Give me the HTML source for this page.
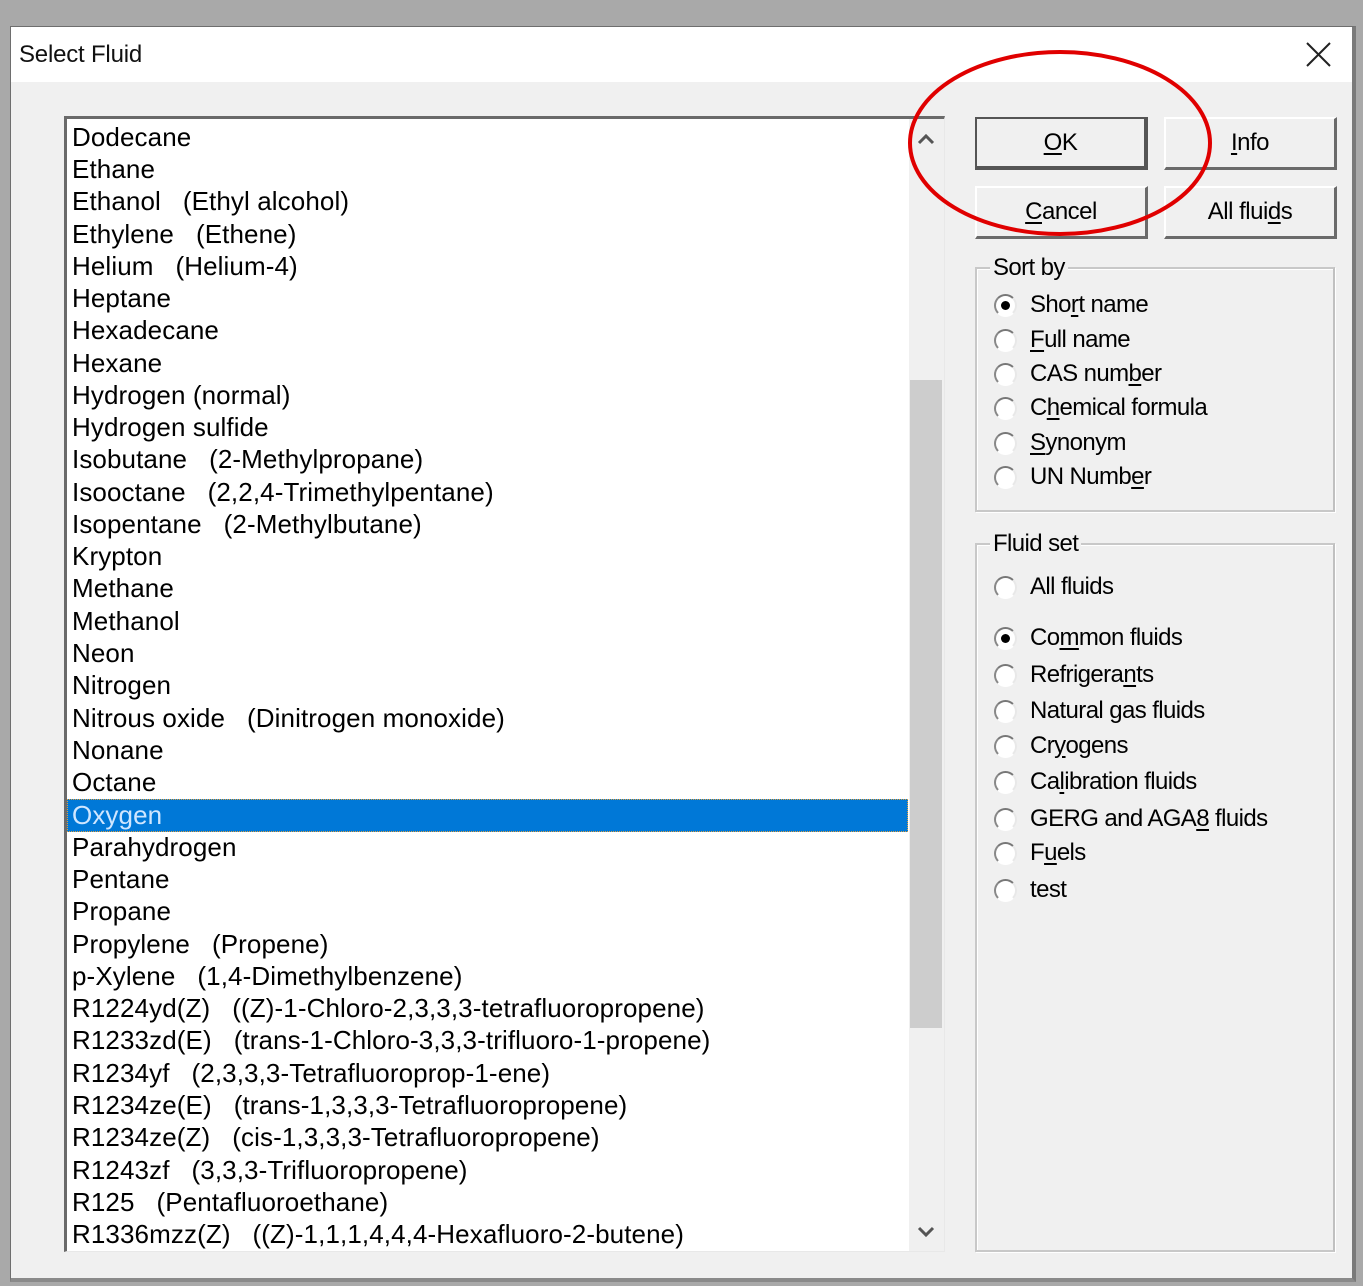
<!DOCTYPE html>
<html><head><meta charset="utf-8"><style>
*{margin:0;padding:0;box-sizing:border-box}
body{width:1363px;height:1286px;background:#a9a9a9;position:relative;overflow:hidden;font-family:"Liberation Sans",Arial,sans-serif}
.win{position:absolute;left:10px;top:26px;width:1346px;height:1256px;background:#f0f0f0;border:1px solid #6e6e6e;border-right:4px solid #7a7a7a;border-bottom:4px solid #8a8a8a}
.title{position:absolute;left:0;top:0;right:0;height:55px;background:#fff}
.title span{position:absolute;left:8px;top:14px;font-size:24px;color:#111;letter-spacing:-0.2px}
.abs{position:absolute}
.list{position:absolute;left:64px;top:116px;width:881px;height:1136px;background:#fff;border-top:3px solid #6a6a6a;border-left:3px solid #6a6a6a;border-right:1px solid #e8e8e8;border-bottom:1px solid #e8e8e8;overflow:hidden}
.row{position:absolute;left:5px;height:32px;line-height:32px;font-size:26px;color:#000;white-space:pre;letter-spacing:0.1px}
.sel{position:absolute;left:0;top:680px;width:841px;height:33px;background:#0078d7;outline:1px dotted #e0a040;outline-offset:-1px}
.sb{position:absolute;left:909px;top:119px;width:35px;height:1132px;background:#f0f0f0}
.thumb{position:absolute;left:910px;top:380px;width:32px;height:648px;background:#cdcdcd}
.btn{position:absolute;width:173px;height:53px;background:#f0f0f0;border-top:2px solid #fff;border-left:2px solid #fff;border-right:3px solid #6a6a6a;border-bottom:3px solid #6a6a6a;font-size:24px;text-align:center;line-height:48px;color:#000;letter-spacing:-0.5px}
.grp{position:absolute;border:2px solid #c8c8c8;border-right-color:#c0c0c0;box-shadow:inset 1px 1px 0 #fff,1px 1px 0 #fff}
.lg{position:absolute;background:#f0f0f0;font-size:24px;padding:0 3px;letter-spacing:-0.6px;color:#000}
.rb{position:absolute;width:23px;height:23px;border-radius:50%;background:#fff;border:2px solid;border-color:#777 #e8e8e8 #fff #888}
.rb.on::after{content:"";position:absolute;left:5px;top:5px;width:9px;height:9px;border-radius:50%;background:#000}
.lb{position:absolute;font-size:24px;letter-spacing:-0.6px;color:#000;white-space:pre}
u{text-decoration:underline;text-underline-offset:3px}
</style></head><body>
<div class="win">
<div class="title"><span>Select Fluid</span>
<svg class="abs" style="left:1295px;top:15px" width="25" height="25" viewBox="0 0 25 25"><path d="M1 1L24 24M24 1L1 24" stroke="#222" stroke-width="2"/></svg>
</div>
</div>
<div class="list">
<div class="sel"></div>
<div class="row" style="top:2px">Dodecane</div>
<div class="row" style="top:34px">Ethane</div>
<div class="row" style="top:66px">Ethanol   (Ethyl alcohol)</div>
<div class="row" style="top:99px">Ethylene   (Ethene)</div>
<div class="row" style="top:131px">Helium   (Helium-4)</div>
<div class="row" style="top:163px">Heptane</div>
<div class="row" style="top:195px">Hexadecane</div>
<div class="row" style="top:228px">Hexane</div>
<div class="row" style="top:260px">Hydrogen (normal)</div>
<div class="row" style="top:292px">Hydrogen sulfide</div>
<div class="row" style="top:324px">Isobutane   (2-Methylpropane)</div>
<div class="row" style="top:357px">Isooctane   (2,2,4-Trimethylpentane)</div>
<div class="row" style="top:389px">Isopentane   (2-Methylbutane)</div>
<div class="row" style="top:421px">Krypton</div>
<div class="row" style="top:453px">Methane</div>
<div class="row" style="top:486px">Methanol</div>
<div class="row" style="top:518px">Neon</div>
<div class="row" style="top:550px">Nitrogen</div>
<div class="row" style="top:583px">Nitrous oxide   (Dinitrogen monoxide)</div>
<div class="row" style="top:615px">Nonane</div>
<div class="row" style="top:647px">Octane</div>
<div class="row" style="top:680px;color:#cfe6ff">Oxygen</div>
<div class="row" style="top:712px">Parahydrogen</div>
<div class="row" style="top:744px">Pentane</div>
<div class="row" style="top:776px">Propane</div>
<div class="row" style="top:809px">Propylene   (Propene)</div>
<div class="row" style="top:841px">p-Xylene   (1,4-Dimethylbenzene)</div>
<div class="row" style="top:873px">R1224yd(Z)   ((Z)-1-Chloro-2,3,3,3-tetrafluoropropene)</div>
<div class="row" style="top:905px">R1233zd(E)   (trans-1-Chloro-3,3,3-trifluoro-1-propene)</div>
<div class="row" style="top:938px">R1234yf   (2,3,3,3-Tetrafluoroprop-1-ene)</div>
<div class="row" style="top:970px">R1234ze(E)   (trans-1,3,3,3-Tetrafluoropropene)</div>
<div class="row" style="top:1002px">R1234ze(Z)   (cis-1,3,3,3-Tetrafluoropropene)</div>
<div class="row" style="top:1035px">R1243zf   (3,3,3-Trifluoropropene)</div>
<div class="row" style="top:1067px">R125   (Pentafluoroethane)</div>
<div class="row" style="top:1099px">R1336mzz(Z)   ((Z)-1,1,1,4,4,4-Hexafluoro-2-butene)</div>
</div>
<div class="sb"></div>
<div class="thumb"></div>
<svg class="abs" style="left:916px;top:132px" width="20" height="14"><path d="M3 11L10 4L17 11" stroke="#555" stroke-width="3" fill="none"/></svg>
<svg class="abs" style="left:916px;top:1225px" width="20" height="14"><path d="M3 3L10 10L17 3" stroke="#555" stroke-width="3" fill="none"/></svg>

<div class="btn" style="left:975px;top:117px;border:2px solid #555;border-right:4px solid #555;border-bottom:4px solid #555"><u>O</u>K</div>
<div class="btn" style="left:1164px;top:117px"><u>I</u>nfo</div>
<div class="btn" style="left:975px;top:186px"><u>C</u>ancel</div>
<div class="btn" style="left:1164px;top:186px">All flui<u>d</u>s</div>

<div class="grp" style="left:975px;top:267px;width:360px;height:245px"></div>
<div class="lg" style="left:990px;top:254px">Sort by</div>
<div class="rb on" style="left:994px;top:294px"></div><div class="lb" style="left:1030px;top:291px">Sho<u>r</u>t name</div>
<div class="rb" style="left:994px;top:329px"></div><div class="lb" style="left:1030px;top:326px"><u>F</u>ull name</div>
<div class="rb" style="left:994px;top:363px"></div><div class="lb" style="left:1030px;top:360px">CAS num<u>b</u>er</div>
<div class="rb" style="left:994px;top:397px"></div><div class="lb" style="left:1030px;top:394px">C<u>h</u>emical formula</div>
<div class="rb" style="left:994px;top:432px"></div><div class="lb" style="left:1030px;top:429px"><u>S</u>ynonym</div>
<div class="rb" style="left:994px;top:466px"></div><div class="lb" style="left:1030px;top:463px">UN Numb<u>e</u>r</div>

<div class="grp" style="left:975px;top:543px;width:360px;height:709px"></div>
<div class="lg" style="left:990px;top:530px">Fluid set</div>
<div class="rb" style="left:994px;top:576px"></div><div class="lb" style="left:1030px;top:573px">All fluids</div>
<div class="rb on" style="left:994px;top:627px"></div><div class="lb" style="left:1030px;top:624px">Co<u>m</u>mon fluids</div>
<div class="rb" style="left:994px;top:664px"></div><div class="lb" style="left:1030px;top:661px">Refrigera<u>n</u>ts</div>
<div class="rb" style="left:994px;top:700px"></div><div class="lb" style="left:1030px;top:697px">Natural <u>g</u>as fluids</div>
<div class="rb" style="left:994px;top:735px"></div><div class="lb" style="left:1030px;top:732px">Cr<u>y</u>ogens</div>
<div class="rb" style="left:994px;top:771px"></div><div class="lb" style="left:1030px;top:768px">Ca<u>l</u>ibration fluids</div>
<div class="rb" style="left:994px;top:808px"></div><div class="lb" style="left:1030px;top:805px">GERG and AGA<u>8</u> fluids</div>
<div class="rb" style="left:994px;top:842px"></div><div class="lb" style="left:1030px;top:839px">F<u>u</u>els</div>
<div class="rb" style="left:994px;top:879px"></div><div class="lb" style="left:1030px;top:876px">test</div>

<svg class="abs" style="left:0;top:0" width="1363" height="1286"><ellipse cx="1060" cy="143" rx="150" ry="91" fill="none" stroke="#e00000" stroke-width="4"/></svg>
</body></html>
